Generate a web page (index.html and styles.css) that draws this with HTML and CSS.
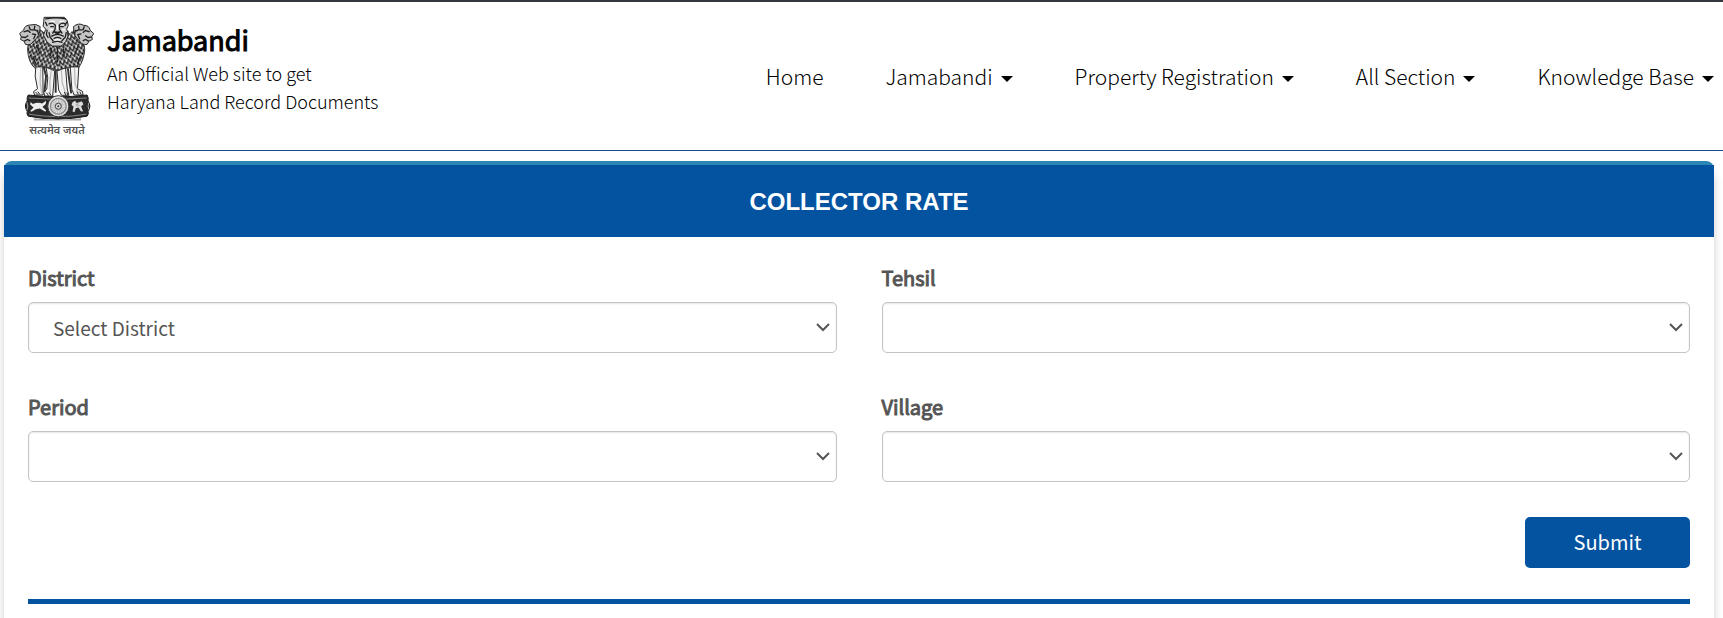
FILE: index.html
```html
<!DOCTYPE html>
<html lang="en">
<head>
<meta charset="utf-8">
<meta name="viewport" content="width=device-width, initial-scale=1">
<title>Jamabandi - Collector Rate</title>
<link rel="stylesheet" href="styles.css">
</head>
<body>
<header class="site-header">
  <a class="brand" href="#">
    <svg class="emblem" viewBox="54 48 231 363" role="img" aria-label="State Emblem of India">
      <defs>
        <pattern id="mane-left" width="13" height="17" patternUnits="userSpaceOnUse" patternTransform="rotate(14)">
          <rect width="13" height="17" fill="#8d8d8d"/>
          <path d="M1 1q0 9 5 13q5-3 6-13M7 10v7" fill="#b9b9b9" stroke="#1a1a1a" stroke-width="3"/>
          <path d="M6 1l1 7M1 12l2 4" stroke="#fff" stroke-width="2"/>
        </pattern>
        <pattern id="mane-right" width="13" height="17" patternUnits="userSpaceOnUse" patternTransform="rotate(-14)">
          <rect width="13" height="17" fill="#8d8d8d"/>
          <path d="M1 1q0 9 5 13q5-3 6-13M7 10v7" fill="#b9b9b9" stroke="#1a1a1a" stroke-width="3"/>
          <path d="M6 1l1 7M1 12l2 4" stroke="#fff" stroke-width="2"/>
        </pattern>
      </defs>
      <path d="M174 100H134Q118 82 100 84Q80 108 82 150Q84 188 105 207L145 204L174 214Z" fill="url(#mane-left)"/>
      <path d="M174 100H210Q226 82 243 90Q258 105 255 150Q252 183 235 207L205 204L174 214Z" fill="url(#mane-right)"/>
      <path d="M100 124Q82 130 82 150Q84 188 105 207L145 204L174 214L205 204L235 207Q252 183 255 150Q253 128 238 122" fill="none" stroke="#333" stroke-width="3"/>
      <g stroke="#222" stroke-width="3" stroke-linejoin="round">
        <path d="M120 80Q107 70 92 75Q73 75 70 91L58 101L63 111L61 119L71 124L76 134Q91 139 100 124Q120 111 120 80Z" fill="#c4c4c4"/>
        <path d="M221 80Q236 67 251 76Q269 76 271 91L282 101L276 111L278 119L268 124L262 134Q246 137 238 122Q221 111 221 80Z" fill="#c4c4c4"/>
      </g>
      <g fill="none" stroke="#202020" stroke-width="4">
        <path d="M70 96l13-4 8 7M63 111l12 2 9-6M72 124l10-5 8 4M86 79l4 10 11 2M104 77l-2 12 10 5M95 102l11 2-6 14M112 90l3 14"/>
        <path d="M270 96l-13-4-8 7M277 111l-12 2-9-6M267 124l-10-5-8 4M254 79l-4 10-11 2M236 77l2 12-10 5M245 102l-11 2 6 14M227 90l-3 14"/>
      </g>
      <path d="M132 52H193L202 62L205 77L200 88L207 103L197 126L184 139H157L141 127L130 106L137 88L129 79L131 66Z" fill="#d0d0d0" stroke="#222" stroke-width="3"/>
      <g fill="none" stroke="#1d1d1d" stroke-width="4" stroke-linecap="round">
        <path d="M137 57q32-7 60 0M136 67l5 10M201 66l-6 11M147 72q10-6 17 2M179 74q8-8 17-2M152 80h8M182 80h8M166 76l-1 13-7 11M178 76l1 13 7 11M163 96q9 7 18 0M155 109q17-11 35 0M162 116q10-7 21 0M147 98l3 14 9 11M199 98l-3 14-10 11M158 128l14-4 14 4M141 91l-2 13 5 9M204 94v12"/>
      </g>
      <path d="M163 95h18l-4 7h-10Z" fill="#222"/>
      <path d="M150 64h14M179 64h13M172 73v16M149 90l9-2M187 89l8 1M164 120h16" stroke="#fff" stroke-width="4"/>
      <path d="M155 145l-4 24M172 144v45M190 146l3 24M109 136l10 26M237 133l-11 29M98 170l9 23M242 170l-9 23" stroke="#222" stroke-width="4" fill="none"/>
      <g fill="#f2f2f2" stroke="#282828" stroke-width="3">
        <path d="M107 202L105 230L112 268L100 277L103 287H129L128 202Z"/>
        <path d="M138 203L143 235L140 269L131 279L134 290H158L164 214Z"/>
        <path d="M171 214L176 272L185 288H207L202 269L197 205Z"/>
        <path d="M211 202L216 270L223 287H250L248 276L233 268L237 202Z"/>
      </g>
      <path d="M122 205L120 250L125 283M154 210L149 248L151 280M184 211L187 250L197 282M224 206L226 253L235 280" fill="none" stroke="#bbb" stroke-width="4"/>
      <path d="M131 203L138 230L133 278M167 212V280M204 206L207 234L214 282" fill="none" stroke="#333" stroke-width="6"/>
      <path d="M106 278l7 7M113 277l6 8M139 280l6 8M147 279l5 8M193 278l5 9M201 279l3 8M231 277l5 8M240 277l4 8" stroke="#222" stroke-width="3"/>
      <path d="M84 287Q174 298 262 287Q267 295 265 304Q276 320 265 337Q268 344 262 351Q174 369 84 351Q78 344 81 337Q70 320 81 304Q79 295 84 287Z" fill="#2b2b2b" stroke="#1b1b1b" stroke-width="3"/>
      <path d="M85 296Q174 305 261 296M86 345Q174 360 260 345" fill="none" stroke="#888" stroke-width="3"/>
      <circle cx="175" cy="321" r="32" fill="#e2e2e2" stroke="#333" stroke-width="3"/>
      <circle cx="175" cy="321" r="24" fill="#bbb" stroke="#888" stroke-width="4"/>
      <circle cx="175" cy="321" r="17" fill="none" stroke="#eee" stroke-width="9" stroke-dasharray="2 3"/>
      <circle cx="175" cy="321" r="9" fill="#ddd" stroke="#444" stroke-width="3"/>
      <circle cx="175" cy="321" r="3" fill="#333"/>
      <path d="M91 308L98 314Q114 307 126 313L138 304L137 314L127 323L138 333L136 338L119 328L107 330L94 338L90 335L100 325L90 316Z" fill="#eee"/>
      <path d="M218 309L226 304L231 312L246 306L251 315L244 322L250 337L243 336L236 325L228 327L224 339L218 337L221 322L215 317Z" fill="#ddd"/>
      <path d="M80 309q6 11 0 24M268 309q-6 11 0 24M227 315l15 5M236 308l-5 15" fill="none" stroke="#aaa" stroke-width="3"/>
      <path d="M101 357Q174 366 244 357V364H101Z" fill="#aaa"/>
      <text class="motto" x="171" y="404" text-anchor="middle" lang="hi">सत्यमेव जयते</text>
    </svg>
    <span class="brand-text">
      <strong class="brand-name">Jamabandi</strong>
      <span>An Official Web site to get</span>
      <span>Haryana Land Record Documents</span>
    </span>
  </a>
  <nav class="main-nav" aria-label="Main">
    <a href="#">Home</a>
    <a class="has-menu" href="#">Jamabandi</a>
    <a class="has-menu" href="#">Property Registration</a>
    <a class="has-menu" href="#">All Section</a>
    <a class="has-menu" href="#">Knowledge Base</a>
  </nav>
</header>
<main class="panel">
  <h1 class="panel-title">COLLECTOR RATE</h1>
  <form class="panel-body">
    <div class="fields">
      <div class="field">
        <label for="district">District</label>
        <div class="select-box">
          <select id="district"><option>Select District</option></select>
          <svg class="chevron" viewBox="0 0 14 9" aria-hidden="true"><path d="M1 1l6 6 6-6"/></svg>
        </div>
      </div>
      <div class="field">
        <label for="tehsil">Tehsil</label>
        <div class="select-box">
          <select id="tehsil"></select>
          <svg class="chevron" viewBox="0 0 14 9" aria-hidden="true"><path d="M1 1l6 6 6-6"/></svg>
        </div>
      </div>
      <div class="field">
        <label for="period">Period</label>
        <div class="select-box">
          <select id="period"></select>
          <svg class="chevron" viewBox="0 0 14 9" aria-hidden="true"><path d="M1 1l6 6 6-6"/></svg>
        </div>
      </div>
      <div class="field">
        <label for="village">Village</label>
        <div class="select-box">
          <select id="village"></select>
          <svg class="chevron" viewBox="0 0 14 9" aria-hidden="true"><path d="M1 1l6 6 6-6"/></svg>
        </div>
      </div>
    </div>
    <button class="submit" type="button">Submit</button>
    <hr class="rule">
  </form>
</main>
</body>
</html>
```
FILE: styles.css
```css
* {
  box-sizing: border-box;
}

body {
  display: flex;
  flex-direction: column;
  min-height: 100vh;
  margin: 0;
  background: #fff;
  color: #000;
  font-family: "Noto Sans CJK SC", "Noto Sans", sans-serif;
  font-size: 20px;
}

a {
  color: inherit;
  text-decoration: none;
}

.site-header {
  display: flex;
  align-items: flex-start;
  justify-content: space-between;
  padding: 14px 9px 14px 18px;
  border-top: 2px solid #35383e;
  border-bottom: 1px solid #1c4b85;
  font-weight: 300;
}

.brand {
  display: flex;
  gap: 12px;
}

.emblem {
  width: 77px;
  height: 120px;
  overflow: visible;
}

.motto {
  font-family: "Noto Sans Devanagari", "Noto Sans", sans-serif;
  font-size: 33px;
  font-weight: 600;
  fill: #555;
}

.brand-text {
  display: flex;
  flex-direction: column;
  padding-top: 5px;
  font-size: 18px;
  line-height: 28px;
}

.brand-name {
  font-size: 27px;
  font-weight: 400;
  line-height: 38px;
  -webkit-text-stroke: 1px #000;
}

.main-nav {
  display: flex;
  gap: 62px;
  padding-top: 44px;
  font-size: 21px;
  line-height: 32px;
}

.has-menu {
  display: flex;
  align-items: center;
  gap: 8px;
}

.has-menu::after {
  content: "";
  margin-top: 6px;
  border: 6px solid transparent;
  border-top-color: #000;
  border-bottom: 0;
}

.panel {
  flex: 1;
  margin: 10px 9px 0 4px;
  border-top: 4px solid #2c86b4;
  border-radius: 8px 8px 0 0;
  box-shadow: 0 12px 10px rgba(0, 0, 0, 0.2);
  background: #fff;
}

.panel-title {
  margin: 0;
  padding: 21px 20px 19px;
  background: #0353a1;
  color: #fff;
  font-family: "Liberation Sans", Arial, sans-serif;
  font-size: 24px;
  line-height: 32px;
  text-align: center;
}

.panel-body {
  display: flex;
  flex-direction: column;
  padding: 25px 24px 12px;
  color: #555;
}

.fields {
  display: grid;
  grid-template-columns: 1fr 1fr;
  gap: 38px 45px;
}

.field {
  display: flex;
  flex-direction: column;
  gap: 8px;
}

.field label {
  font-weight: 400;
  line-height: 32px;
  -webkit-text-stroke: 1px #555;
}

.select-box {
  position: relative;
  display: grid;
}

.select-box select {
  width: 100%;
  height: 51px;
  padding: 0 24px 1px;
  border: 1px solid #c4c4c4;
  border-radius: 5px;
  box-shadow: inset 0 1px 2px rgba(0, 0, 0, 0.1);
  background: #fff;
  color: #555;
  font-family: inherit;
  font-size: 19px;
  appearance: none;
}

.chevron {
  position: absolute;
  top: 21px;
  right: 7px;
  width: 14px;
  height: 9px;
  fill: none;
  stroke: #555;
  stroke-width: 2;
  pointer-events: none;
}

.submit {
  align-self: flex-end;
  width: 165px;
  height: 51px;
  margin-top: 35px;
  padding: 0 0 3px;
  border: 0;
  border-radius: 5px;
  background: #0353a1;
  color: #fff;
  font-family: inherit;
  font-size: 20px;
}

.rule {
  width: 100%;
  height: 5px;
  margin: 31px 0 0;
  border: 0;
  background: #0353a1;
}
```
